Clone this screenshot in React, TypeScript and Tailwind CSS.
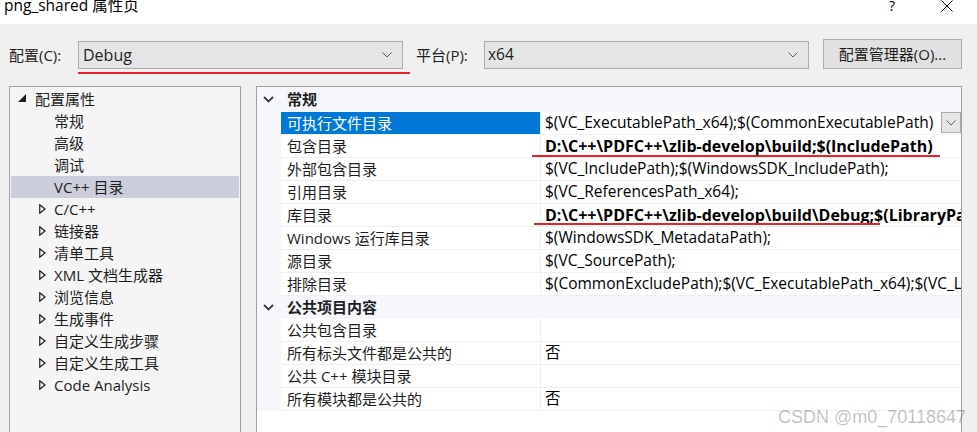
import React from "react";

const FONT = "font-['Open_Sans','Noto_Sans_CJK_SC',sans-serif]";

function Chevron({ className = "" }: { className?: string }) {
  return (
    <svg width="10" height="6" viewBox="0 0 10 6" className={className}>
      <path d="M0.5 0.5 L5 5 L9.5 0.5" fill="none" stroke="#606060" strokeWidth="1" />
    </svg>
  );
}

function CatChevron() {
  return (
    <svg width="11" height="7" viewBox="0 0 11 7">
      <path d="M1 1 L5.5 5.5 L10 1" fill="none" stroke="#3c3c3c" strokeWidth="1.8" />
    </svg>
  );
}

function CollapsedArrow() {
  return (
    <svg width="7" height="10" viewBox="0 0 7 10">
      <path d="M0.75 0.75 L6 5 L0.75 9.25 Z" fill="none" stroke="#1e1e1e" strokeWidth="1.2" />
    </svg>
  );
}

function ExpandedArrow() {
  return (
    <svg width="8" height="8" viewBox="0 0 8 8">
      <path d="M8 0 L8 8 L0 8 Z" fill="#1e1e1e" />
    </svg>
  );
}

type Tree = { label: string; kind: "root" | "leaf" | "closed"; selected?: boolean };
const tree: Tree[] = [
  { label: "配置属性", kind: "root" },
  { label: "常规", kind: "leaf" },
  { label: "高级", kind: "leaf" },
  { label: "调试", kind: "leaf" },
  { label: "VC++ 目录", kind: "leaf", selected: true },
  { label: "C/C++", kind: "closed" },
  { label: "链接器", kind: "closed" },
  { label: "清单工具", kind: "closed" },
  { label: "XML 文档生成器", kind: "closed" },
  { label: "浏览信息", kind: "closed" },
  { label: "生成事件", kind: "closed" },
  { label: "自定义生成步骤", kind: "closed" },
  { label: "自定义生成工具", kind: "closed" },
  { label: "Code Analysis", kind: "closed" },
];

type Row =
  | { cat: string; first?: boolean }
  | { name: string; value: string; bold?: boolean; selected?: boolean; dropdown?: boolean };

const rows: Row[] = [
  { cat: "常规", first: true },
  { name: "可执行文件目录", value: "$(VC_ExecutablePath_x64);$(CommonExecutablePath)", selected: true, dropdown: true },
  { name: "包含目录", value: "D:\\C++\\PDFC++\\zlib-develop\\build;$(IncludePath)", bold: true },
  { name: "外部包含目录", value: "$(VC_IncludePath);$(WindowsSDK_IncludePath);" },
  { name: "引用目录", value: "$(VC_ReferencesPath_x64);" },
  { name: "库目录", value: "D:\\C++\\PDFC++\\zlib-develop\\build\\Debug;$(LibraryPath)", bold: true },
  { name: "Windows 运行库目录", value: "$(WindowsSDK_MetadataPath);" },
  { name: "源目录", value: "$(VC_SourcePath);" },
  { name: "排除目录", value: "$(CommonExcludePath);$(VC_ExecutablePath_x64);$(VC_LibraryPath_x64)" },
  { cat: "公共项目内容" },
  { name: "公共包含目录", value: "" },
  { name: "所有标头文件都是公共的", value: "否" },
  { name: "公共 C++ 模块目录", value: "" },
  { name: "所有模块都是公共的", value: "否" },
];

export default function App() {
  return (
    <div className={`relative w-[977px] h-[432px] overflow-hidden bg-[#f0f0f0] text-[15px] text-[#1e1e1e] ${FONT}`}>
      {/* title bar */}
      <div className="h-[24px] bg-white flex items-start overflow-hidden">
        <div className="ml-[4px] mt-[-5px] text-[15.5px] leading-[20px] text-black">png_shared 属性页</div>
        <div className="ml-auto mt-[-4px] text-[14px] leading-[20px] text-black w-[10px] mr-[42px]">?</div>
        <svg width="12" height="12" viewBox="0 0 12 12" className="mr-[24px] mt-[0px]">
          <path d="M0.5 0.5 L11.5 11.5 M11.5 0.5 L0.5 11.5" stroke="#000" strokeWidth="1" />
        </svg>
      </div>

      {/* config row */}
      <div className="flex items-start pt-[15px] h-[62px]">
        <div className="ml-[9px] w-[69px] h-[28px] mt-[2px] flex items-center">配置(C):</div>
        <div className="w-[325px] h-[28px] mt-[2px] bg-[#e5e5e5] border border-[#acacac] flex items-center pl-[4px] pr-[10px]">
          <span className="text-[16px]">Debug</span>
          <Chevron className="ml-auto" />
        </div>
        <div className="ml-[13px] w-[68px] h-[28px] mt-[2px] flex items-center">平台(P):</div>
        <div className="w-[325px] h-[28px] mt-[2px] bg-[#e5e5e5] border border-[#acacac] flex items-center pl-[3px] pr-[10px]">
          <span className="text-[15.5px]">x64</span>
          <Chevron className="ml-auto" />
        </div>
        <div className="ml-[14px] w-[139px] h-[30px] bg-[#e1e1e1] border border-[#adadad] flex items-center justify-center">
          配置管理器(O)...
        </div>
      </div>

      {/* panels */}
      <div className="flex">
        {/* tree */}
        <div className="ml-[9px] w-[232px] h-[360px] border border-[#a0a0a0] bg-[#f5f5f5] pt-[1px]">
          {tree.map((t, i) => (
            <div
              key={i}
              className={`h-[22px] mx-[1px] flex items-center whitespace-nowrap ${t.selected ? "bg-[#cccedb]" : ""}`}
            >
              {t.kind === "root" && (
                <>
                  <span className="ml-[7px] mt-[-2px] flex"><ExpandedArrow /></span>
                  <span className="ml-[9px]">{t.label}</span>
                </>
              )}
              {t.kind === "leaf" && <span className="ml-[43px]">{t.label}</span>}
              {t.kind === "closed" && (
                <>
                  <span className="ml-[28px] flex"><CollapsedArrow /></span>
                  <span className="ml-[8px]">{t.label}</span>
                </>
              )}
            </div>
          ))}
        </div>

        {/* property grid */}
        <div className="ml-[15px] w-[706px] h-[360px] border-l border-t border-r border-[#a0a0a0] bg-white overflow-hidden">
          {rows.map((r, i) =>
            "cat" in r ? (
              <div key={i} className={`${r.first ? "h-[25px]" : "h-[23px]"} bg-[#f5f7fb] flex items-center`}>
                <span className="ml-[6px] w-[24px] flex"><CatChevron /></span>
                <span className="font-bold">{r.cat}</span>
              </div>
            ) : (
              <div key={i} className="h-[23px] flex">
                <div className="w-[24px] bg-[#f5f7fb]" />
                <div
                  className={`w-[260px] border-b border-r border-[#f0f0f0] pl-[6px] flex items-center whitespace-nowrap ${
                    r.selected ? "bg-[#0078d7] text-white border-[#0078d7]" : ""
                  }`}
                >
                  {r.name}
                </div>
                <div className="flex-1 min-w-0 border-b border-[#f0f0f0] flex items-center overflow-hidden">
                  <span
                    className={`pl-[4px] whitespace-nowrap text-black ${r.bold ? "font-bold text-[16px]" : "text-[15.5px]"}`}
                  >
                    {r.value}
                  </span>
                  {r.dropdown && (
                    <div className="ml-auto w-[20px] h-[21px] self-start bg-[#e5e5e5] border border-[#acacac] flex items-center justify-center shrink-0">
                      <Chevron />
                    </div>
                  )}
                </div>
              </div>
            )
          )}
        </div>
      </div>

      {/* red annotation lines */}
      <div className="absolute left-[78px] top-[72px] w-[332px] h-[2px] bg-[#e8212b]" />
      <div className="absolute left-[532px] top-[155px] w-[408px] h-[2px] bg-[#e8212b]" />
      <div className="absolute left-[534px] top-[223px] w-[346px] h-[2px] bg-[#e8212b]" />

      {/* watermark */}
      <div className="absolute left-[778px] top-[404px] text-[18px] font-['Liberation_Sans',sans-serif] text-[rgba(0,0,0,0.25)] whitespace-nowrap">
        CSDN @m0_70118647
      </div>
    </div>
  );
}
